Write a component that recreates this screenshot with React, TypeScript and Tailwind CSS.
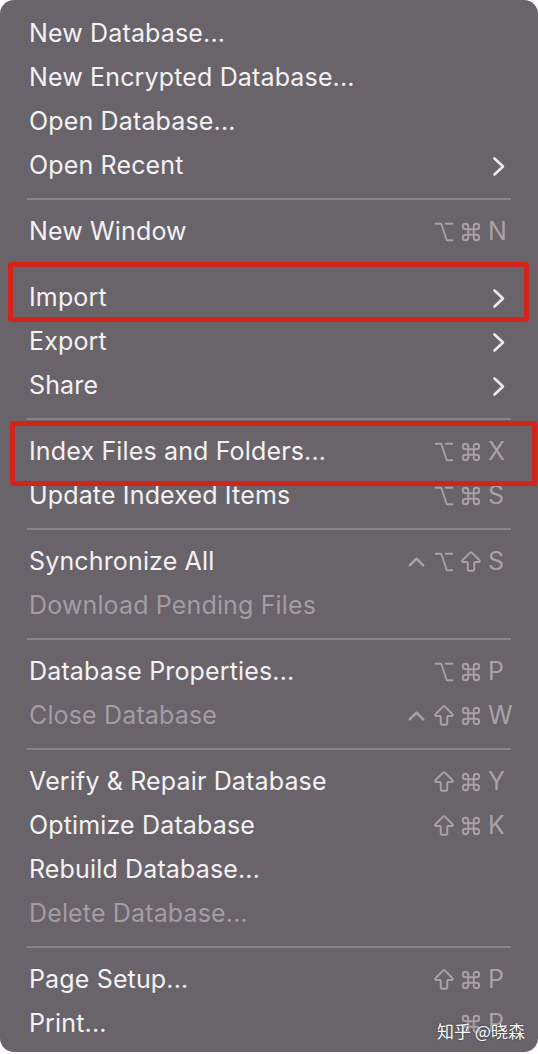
import { Command, Option, ArrowBigUp, ChevronUp } from "lucide-react";

type Mod = "ctrl" | "opt" | "shift" | "cmd";

type Item =
  | { sep: true }
  | {
      sep?: false;
      label: string;
      disabled?: boolean;
      submenu?: boolean;
      mods?: Mod[];
      keyChar?: string;
    };

// menu contents, top to bottom
const items: Item[] = [
  { label: "New Database..." },
  { label: "New Encrypted Database..." },
  { label: "Open Database..." },
  { label: "Open Recent", submenu: true },
  { sep: true },
  { label: "New Window", mods: ["opt", "cmd"], keyChar: "N" },
  { sep: true },
  { label: "Import", submenu: true },
  { label: "Export", submenu: true },
  { label: "Share", submenu: true },
  { sep: true },
  { label: "Index Files and Folders...", mods: ["opt", "cmd"], keyChar: "X" },
  { label: "Update Indexed Items", mods: ["opt", "cmd"], keyChar: "S" },
  { sep: true },
  { label: "Synchronize All", mods: ["ctrl", "opt", "shift"], keyChar: "S" },
  { label: "Download Pending Files", disabled: true },
  { sep: true },
  { label: "Database Properties...", mods: ["opt", "cmd"], keyChar: "P" },
  { label: "Close Database", disabled: true, mods: ["ctrl", "shift", "cmd"], keyChar: "W" },
  { sep: true },
  { label: "Verify & Repair Database", mods: ["shift", "cmd"], keyChar: "Y" },
  { label: "Optimize Database", mods: ["shift", "cmd"], keyChar: "K" },
  { label: "Rebuild Database..." },
  { label: "Delete Database...", disabled: true },
  { sep: true },
  { label: "Page Setup...", mods: ["shift", "cmd"], keyChar: "P" },
  { label: "Print...", mods: ["cmd"], keyChar: "P" },
];

function ModIcon({ mod }: { mod: Mod }) {
  if (mod === "cmd") return <Command size={22} strokeWidth={2} />;
  if (mod === "opt") return <Option size={22} strokeWidth={2} />;
  if (mod === "shift") return <ArrowBigUp size={26} strokeWidth={1.8} />;
  return <ChevronUp size={28} strokeWidth={2.2} />;
}

function Chevron() {
  return (
    <svg width="14" height="21" viewBox="0 0 14 21" fill="none">
      <polyline
        points="2.5,2.5 11,10.5 2.5,18.5"
        stroke="#ece9ec"
        strokeWidth="2.6"
        strokeLinecap="round"
        strokeLinejoin="round"
      />
    </svg>
  );
}

export default function App() {
  return (
    <div className="relative h-[1054px] w-[538px] bg-white font-['Inter','Noto_Sans',sans-serif]">
      <div className="h-[1052px] w-[538px] rounded-[14px] bg-[#69636a] pt-[12px]">
        {items.map((item, i) =>
          item.sep ? (
            <div key={i} className="flex h-[22px] items-center pl-[27px] pr-[27px]">
              <div className="h-[2px] w-full bg-[#8a848a]" />
            </div>
          ) : (
            <div
              key={i}
              className="flex h-[44px] items-center justify-between pl-[29px] pr-[32px]"
            >
              <span
                className={
                  "text-[25px] tracking-[0.15px] " +
                  (item.disabled ? "text-[#a39da3]" : "text-[#f4f2f4]")
                }
              >
                {item.label}
              </span>
              {item.submenu && <Chevron />}
              {item.keyChar && (
                <div className="-mr-[3px] flex items-center text-[#a8a2a7]">
                  {item.mods?.map((m) => (
                    <div key={m} className="flex w-[27px] justify-center">
                      <ModIcon mod={m} />
                    </div>
                  ))}
                  <div className="w-[25px] pl-[4px] text-[25px]">{item.keyChar}</div>
                </div>
              )}
            </div>
          ),
        )}
      </div>

      {/* red annotation boxes */}
      <div className="absolute left-[8px] top-[262px] h-[60px] w-[521px] rounded-[3px] border-[5px] border-[#d3241b]" />
      <div className="absolute left-[10px] top-[421px] h-[65px] w-[527px] rounded-[3px] border-[5px] border-[#d3241b]" />

      {/* watermark */}
      <div className="absolute left-[437px] top-[1018px] text-[17px] text-white [text-shadow:0_0_2px_rgba(0,0,0,0.6)] font-['Noto_Sans_CJK_SC',sans-serif]">
        知乎 @晓森
      </div>
    </div>
  );
}
